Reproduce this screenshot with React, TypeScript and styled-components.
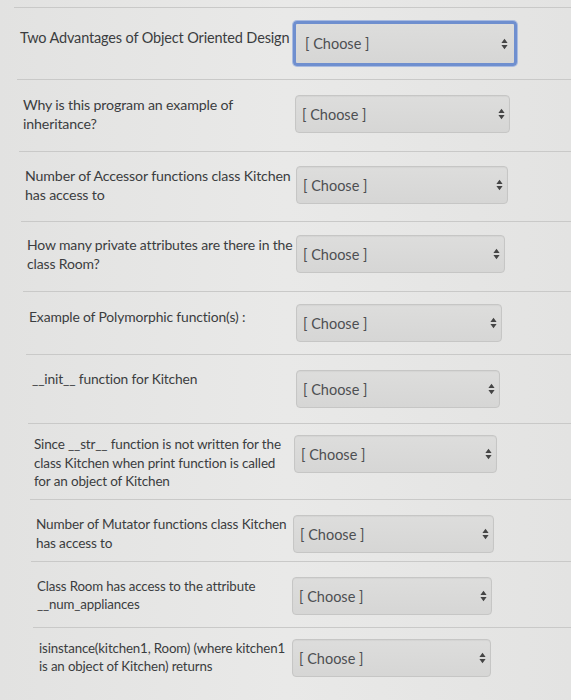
import React from "react";
import styled, { createGlobalStyle } from "styled-components";

const Global = createGlobalStyle`
  html, body { margin: 0; padding: 0; background: #e4e4e3; }
  body { font-family: Lato, "Open Sans", sans-serif; }
`;

const Page = styled.div`
  width: 571px;
  height: 700px;
  overflow: hidden;
  background: linear-gradient(90deg, #e2e2e1 0%, #e9e9e8 50%, #e3e3e2 100%);
  padding-top: 7px;
  box-sizing: border-box;
`;

const Row = styled.div<{ $h: number; $indent: number; $top: number }>`
  display: flex;
  align-items: flex-start;
  height: ${(p) => p.$h}px;
  box-sizing: border-box;
  margin-left: ${(p) => p.$indent - 6}px;
  padding-left: 6px;
  padding-top: ${(p) => p.$top}px;
  border-top: 1.5px solid #c9c9c8;
`;

const Label = styled.div<{ $w: number; $dy: number; $fs: number }>`
  width: ${(p) => p.$w}px;
  flex: none;
  font-size: ${(p) => p.$fs}px;
  line-height: ${(p) => p.$fs * 1.37}px;
  color: #3b3d40;
  padding-top: ${(p) => p.$dy}px;
  letter-spacing: -0.15px;
  white-space: nowrap;
`;

const Select = styled.div<{ $w: number; $focus?: boolean }>`
  flex: none;
  width: ${(p) => p.$w}px;
  height: ${(p) => (p.$focus ? 45 : 38)}px;
  box-sizing: border-box;
  border-radius: 4px;
  border: ${(p) => (p.$focus ? "3px solid #6f8fcf" : "1.5px solid #c6c6c5")};
  background: linear-gradient(180deg, #dddddc 0%, #d6d6d5 100%);
  box-shadow: ${(p) => (p.$focus ? "0 0 0 1px #a9bbe0" : "inset 0 1px 1px rgba(0,0,0,0.04)")};
  display: flex;
  align-items: center;
  padding-left: ${(p) => (p.$focus ? 9 : 6)}px;
  padding-right: ${(p) => (p.$focus ? 6 : 4)}px;
  font-size: 14.5px;
  color: #4d4f52;
`;

const ChooseText = styled.span`
  flex: 1;
`;

const Arrows = styled.svg`
  flex: none;
  width: 7px;
  height: 12px;
`;

type Item = {
  text: React.ReactNode;
  h: number;
  indent: number;
  top: number;
  labelW: number;
  dy: number;
  fs: number;
  selW: number;
  focus?: boolean;
};

const items: Item[] = [
  { text: "Two Advantages of Object Oriented Design", h: 72, indent: 20, top: 13, labelW: 273, dy: 7, fs: 14.5, selW: 224, focus: true },
  { text: <>Why is this program an example of<br />inheritance?</>, h: 72, indent: 23, top: 15, labelW: 272, dy: 0, fs: 14.2, selW: 215 },
  { text: <>Number of Accessor functions class Kitchen<br />has access to</>, h: 70, indent: 25, top: 14, labelW: 271, dy: 0, fs: 14.2, selW: 212 },
  { text: <>How many private attributes are there in the<br />class Room?</>, h: 70, indent: 27, top: 13, labelW: 269, dy: 0, fs: 14, selW: 209 },
  { text: "Example of Polymorphic function(s) :", h: 63, indent: 29, top: 12, labelW: 267, dy: 3, fs: 13.9, selW: 206 },
  { text: "__init__ function for Kitchen", h: 69, indent: 32, top: 15, labelW: 264, dy: -4, fs: 13.8, selW: 204 },
  { text: <>Since __str__ function is not written for the<br />class Kitchen when print function is called<br />for an object of Kitchen</>, h: 76, indent: 34, top: 11, labelW: 260, dy: 0, fs: 13.5, selW: 203 },
  { text: <>Number of Mutator functions class Kitchen<br />has access to</>, h: 62, indent: 36, top: 15, labelW: 257, dy: 0, fs: 13.6, selW: 201 },
  { text: <>Class Room has access to the attribute<br />__num_appliances</>, h: 66, indent: 37, top: 15, labelW: 255, dy: 0, fs: 13.3, selW: 200 },
  { text: <>isinstance(kitchen1, Room) (where kitchen1<br />is an object of Kitchen) returns</>, h: 80, indent: 39, top: 11, labelW: 253, dy: 0, fs: 13.3, selW: 199 },
];

export default function App() {
  return (
    <Page>
      <Global />
      {items.map((it, i) => (
        <Row key={i} $h={it.h} $indent={it.indent} $top={it.top}>
          <Label $w={it.labelW} $dy={it.dy} $fs={it.fs}>{it.text}</Label>
          <Select $w={it.selW} $focus={it.focus}>
            <ChooseText>[ Choose ]</ChooseText>
            <Arrows viewBox="0 0 7 12">
              <path d="M3.5 0.8 L6.6 5 L0.4 5 Z M3.5 11.2 L6.6 7 L0.4 7 Z" fill="#454545" />
            </Arrows>
          </Select>
        </Row>
      ))}
    </Page>
  );
}
